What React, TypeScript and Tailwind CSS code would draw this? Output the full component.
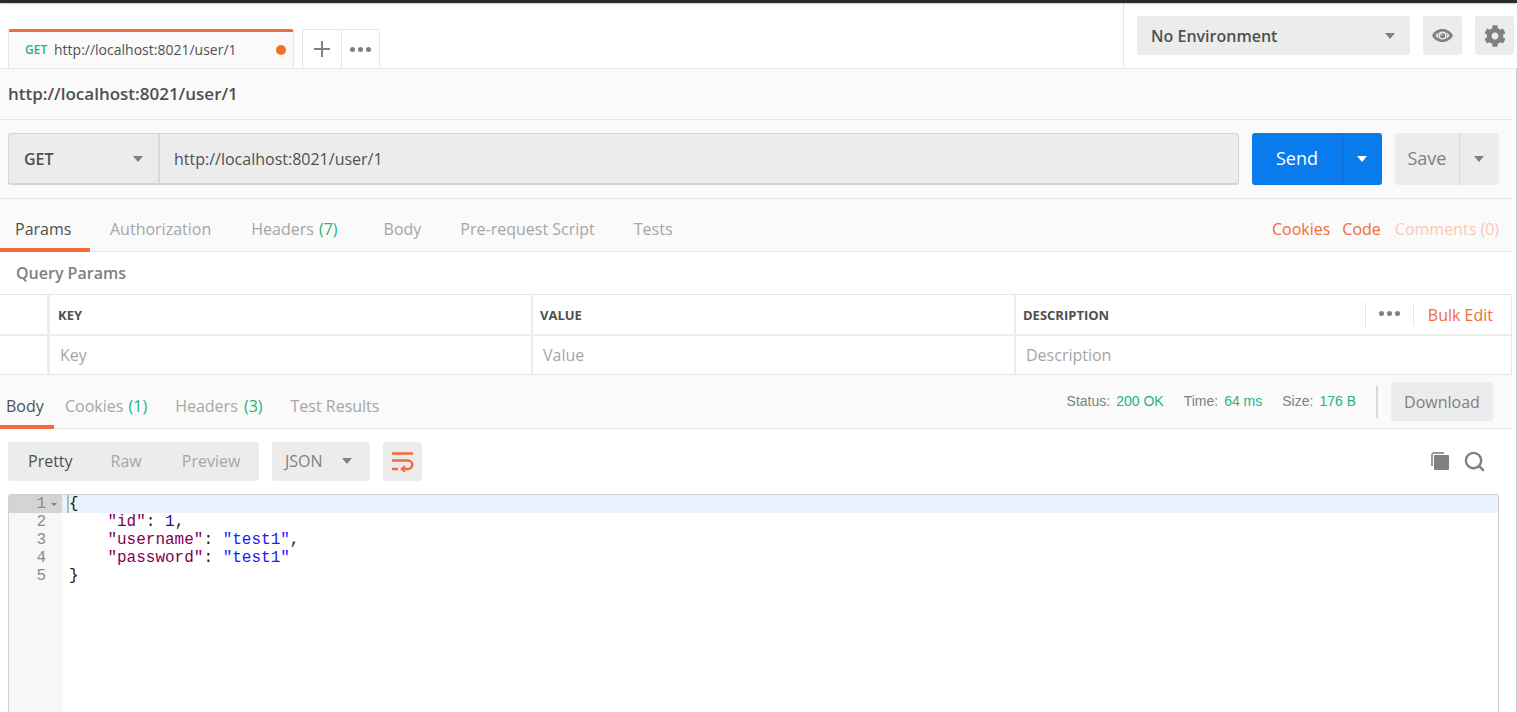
import { FaCog } from "react-icons/fa";
import { Search } from "lucide-react";

const orange = "text-[#f26b3a]";

function Caret({ className = "border-t-[#808080]" }: { className?: string }) {
  return <span className={`h-0 w-0 border-x-[5px] border-t-[6px] border-x-transparent ${className}`} />;
}

function Dots({ className = "" }: { className?: string }) {
  return (
    <span className={`flex gap-[3px] ${className}`}>
      <span className="h-[5px] w-[5px] rounded-full bg-[#808080]" />
      <span className="h-[5px] w-[5px] rounded-full bg-[#808080]" />
      <span className="h-[5px] w-[5px] rounded-full bg-[#808080]" />
    </span>
  );
}

function TabBar() {
  return (
    <div className="flex h-[66px] border-b border-[#e6e6e6] bg-white">
      <div className="flex flex-1 items-end pl-2">
        <div className="flex h-[39px] w-[286px] items-center rounded-t-[3px] border-x border-[#e6e6e6] border-t-[3px] border-t-[#f26b3a] bg-[#fafafa] pl-[16px] pr-[7px]">
          <span className="w-[29px] text-[12px] font-semibold text-[#26b47f]">GET</span>
          <span className="mb-[2px] flex-1 text-[14px] text-[#505050]">http://localhost:8021/user/1</span>
          <span className="h-[10px] w-[10px] rounded-full bg-[#f47023]" />
        </div>
        <div className="ml-2 flex h-[39px] w-[78px] rounded-t-[3px] border-x border-t border-[#e6e6e6]">
          <span className="flex w-[39px] items-center justify-center border-r border-[#e6e6e6]">
            <svg width="16" height="16" viewBox="0 0 16 16">
              <path d="M8 0v16M0 8h16" stroke="#808080" strokeWidth="2" />
            </svg>
          </span>
          <span className="flex flex-1 items-center justify-center">
            <Dots />
          </span>
        </div>
      </div>
      <div className="flex w-[394px] items-start border-l border-[#e6e6e6] pl-[13px] pt-[13px]">
        <div className="flex h-[39px] w-[273px] items-center justify-between rounded-[3px] bg-[#ececec] pl-[14px] pr-[15px] text-[16px] font-semibold text-[#505050]">
          No Environment
          <Caret />
        </div>
        <div className="ml-[13px] flex h-[39px] w-[39px] items-center justify-center rounded-[3px] bg-[#ececec]">
          <svg width="21" height="13" viewBox="0 0 21 13">
            <path
              fillRule="evenodd"
              fill="#808080"
              d="M10.500 0C6 0 2 2.600 0 6.500 2 10.400 6 13 10.500 13S19 10.400 21 6.500C19 2.600 15 0 10.500 0zm0 2.500a4 4 0 1 1 0 8 4 4 0 0 1 0-8zm-7 4a7 7 0 0 1 3.600-3.200 5 5 0 0 0 0 6.400 7 7 0 0 1-3.600-3.200zm14 0a7 7 0 0 1-3.600 3.200 5 5 0 0 0 0-6.400 7 7 0 0 1 3.600 3.200z"
            />
            <circle cx="10.500" cy="6.500" r="2.600" fill="#808080" />
            <circle cx="9.500" cy="5.500" r="0.900" fill="#ececec" />
          </svg>
        </div>
        <div className="ml-[13px] flex h-[39px] w-[39px] items-center justify-center rounded-[3px] bg-[#ececec]">
          <FaCog className="text-[22px] text-[#808080]" />
        </div>
      </div>
    </div>
  );
}

function RequestBar() {
  return (
    <div className="flex h-[79px] items-center gap-[13px] border-b border-[#e6e6e6] pl-2 pr-[13px]">
      <div className="flex h-[52px] flex-1 rounded-[3px] border border-b-2 border-[#d4d4d4] bg-[#ececec] text-[#505050]">
        <div className="flex w-[151px] items-center justify-between border-r-2 border-[#d9d9d9] pl-[15px] pr-[15px] text-[16px] font-semibold">
          GET
          <Caret />
        </div>
        <div className="flex items-center pl-[14px] text-[16px]">http://localhost:8021/user/1</div>
      </div>
      <div className="flex h-[52px] w-[130px] rounded-[3px] bg-[#097bed] text-white">
        <div className="flex w-[91px] items-center justify-center border-r border-[#0a6ad0] pb-[2px] text-[18px] font-medium">Send</div>
        <div className="flex flex-1 items-center justify-center pr-[2px]">
          <Caret className="border-t-white" />
        </div>
      </div>
      <div className="flex h-[52px] w-[104px] rounded-[3px] bg-[#ececec] text-[#808080]">
        <div className="flex w-[65px] items-center justify-center border-r border-[#d9d9d9] pb-[2px] text-[18px] font-medium">Save</div>
        <div className="flex flex-1 items-center justify-center pr-[2px]">
          <Caret />
        </div>
      </div>
    </div>
  );
}

function RequestTabs() {
  return (
    <div className="flex h-[53px] items-center border-b border-[#e6e6e6] pr-[13px] pt-[8px] text-[16px] text-[#a6a6a6]">
      <div className="relative flex h-full w-[90px] items-center pl-[15px] text-[#505050]">
        Params
        <span className="absolute inset-x-0 -bottom-px h-[4px] bg-[#f26b3a]" />
      </div>
      <span className="ml-[20px]">Authorization</span>
      <span className="ml-[40px]">
        Headers <span className="ml-px text-[#26b47f]">(7)</span>
      </span>
      <span className="ml-[46px]">Body</span>
      <span className="ml-[39px]">Pre-request Script</span>
      <span className="ml-[39px]">Tests</span>
      <span className={`ml-auto ${orange}`}>Cookies</span>
      <span className={`ml-[12px] ${orange}`}>Code</span>
      <span className="ml-[14px] text-[#fbc9b6]">Comments (0)</span>
    </div>
  );
}

function ParamsTable() {
  return (
    <div className="bg-white">
      <div className="flex h-[42px] items-center pl-4 text-[16px] font-semibold text-[#808080]">Query Params</div>
      <div className="grid grid-cols-[50px_483px_483px_1fr] grid-rows-[41px_38px] border-y border-r border-[#e6e6e6] text-[#a6a6a6]">
        <div className="border-b-2 border-r-[3px] border-[#ececec]" />
        <div className="flex items-center border-b-2 border-r-2 border-[#ececec] pl-[8px] pt-[2px] text-[13px] font-bold text-[#505050]">KEY</div>
        <div className="flex items-center border-b-2 border-r-2 border-[#ececec] pl-[7px] pt-[2px] text-[13px] font-bold text-[#505050]">VALUE</div>
        <div className="flex items-center border-b-2 border-[#ececec] pl-[7px] text-[13px] font-bold text-[#505050]">
          <span className="pt-[2px]">DESCRIPTION</span>
          <div className="ml-auto flex h-[26px] w-[48px] items-center justify-center border-l border-[#e6e6e6]">
            <Dots className="-translate-y-px" />
          </div>
          <div className={`flex h-[22px] items-center border-l border-[#e6e6e6] pl-[14px] pr-[18px] text-[16px] font-normal ${orange}`}>Bulk Edit</div>
        </div>
        <div className="border-r-[3px] border-[#ececec]" />
        <div className="flex items-center border-r-2 border-[#ececec] pl-[10px] text-[16px]">Key</div>
        <div className="flex items-center border-r-2 border-[#ececec] pl-[10px] text-[16px]">Value</div>
        <div className="flex items-center pl-[10px] text-[16px]">Description</div>
      </div>
    </div>
  );
}

function ResponseBar() {
  return (
    <div className="flex h-[54px] items-center border-b border-[#e6e6e6] pr-[19px] text-[16px] text-[#a6a6a6]">
      <div className="flex h-full items-center pt-[9px]">
        <div className="relative flex h-full w-[54px] items-center pl-[6px] text-[#505050]">
          Body
          <span className="absolute inset-x-0 -bottom-px h-[4px] bg-[#f26b3a]" />
        </div>
        <span className="ml-[11px]">
          Cookies <span className="ml-px text-[#26b47f]">(1)</span>
        </span>
        <span className="ml-[28px]">
          Headers <span className="ml-[2px] text-[#26b47f]">(3)</span>
        </span>
        <span className="ml-[28px]">Test Results</span>
      </div>
      <div className="ml-auto flex items-center font-['Liberation_Sans',sans-serif] text-[14px] text-[#808080]">
        <span>Status:</span>
        <span className="ml-[6px] text-[#26b47f]">200 OK</span>
        <span className="ml-[20px]">Time:</span>
        <span className="ml-[6px] text-[#26b47f]">64 ms</span>
        <span className="ml-[20px]">Size:</span>
        <span className="ml-[6px] text-[#26b47f]">176 B</span>
      </div>
      <span className="ml-[20px] h-[32px] w-[2px] bg-[#d9d9d9]" />
      <div className="ml-[13px] flex h-[39px] w-[102px] items-center justify-center rounded-[3px] bg-[#ececec] text-[#808080]">Download</div>
    </div>
  );
}

function ResponseTools() {
  return (
    <div className="flex h-[65px] items-center bg-white pl-2 pr-[26px] text-[16px]">
      <div className="flex h-[39px] w-[251px] items-center rounded-[3px] bg-[#ececec] pb-[2px] text-[#a6a6a6]">
        <span className="ml-[20px] text-[#505050]">Pretty</span>
        <span className="ml-[38px]">Raw</span>
        <span className="ml-[40px]">Preview</span>
      </div>
      <div className="ml-[13px] flex h-[39px] w-[98px] items-center justify-between rounded-[3px] bg-[#ececec] pb-[2px] pl-[13px] pr-[18px] text-[#808080]">
        JSON
        <Caret />
      </div>
      <div className="ml-[13px] flex h-[39px] w-[39px] items-center justify-center rounded-[3px] bg-[#ececec]">
        <svg width="22" height="20" viewBox="0 0 22 20" fill="none" stroke="#f26b3a" strokeWidth="2.400">
          <path d="M0 1.500h21M0 8.500h16a4.250 4.250 0 0 1 0 8.500h-6M0 17h6" />
          <path d="M13 14l-3.500 3 3.500 3" strokeWidth="1.800" />
        </svg>
      </div>
      <svg className="mb-[2px] ml-auto" width="20" height="20" viewBox="0 0 20 20" fill="#808080">
        <path d="M1 3.500 3 1h11v2H3.500L3 3.500V15H1z" opacity="0.800" />
        <rect x="4" y="4" width="15" height="15" rx="1" />
      </svg>
      <Search className="ml-[13px] h-[23px] w-[23px] text-[#808080]" strokeWidth={2.500} />
    </div>
  );
}

function Editor() {
  const lines = [1, 2, 3, 4, 5];
  const key = "text-[#7f0055]";
  const str = "text-[#1a1aff]";
  return (
    <div className="flex-1 bg-white pl-2 pr-[13px]">
      <div className="flex h-full overflow-hidden rounded-t-[3px] border-x border-t border-[#d0d0d0] font-['Liberation_Mono',monospace] text-[16px] leading-[18px] text-[#1a1a1a]">
        <div className="w-[53px] bg-[#f7f7f7] text-right text-[#8c8c8c]">
          {lines.map((n) => (
            <div key={n} className={`flex h-[18px] justify-end pr-[16px] ${n === 1 ? "relative bg-[#d4d4d4]" : ""}`}>
              {n}
              {n === 1 && (
                <span className="absolute right-[5px] top-[8px] h-0 w-0 border-x-[3px] border-t-[3px] border-x-transparent border-t-[#808080]" />
              )}
            </div>
          ))}
        </div>
        <div className="flex-1 whitespace-pre">
          <div className="h-[18px] bg-[#e8f2fc] pl-[7px]">
            <span className="-ml-[2px] border-l-2 border-[#a9bccf]">{"{"}</span>
          </div>
          <div className="pl-[7px]">
            {"    "}
            <span className={key}>"id"</span>: <span className="text-[#11118c]">1</span>,
          </div>
          <div className="pl-[7px]">
            {"    "}
            <span className={key}>"username"</span>: <span className={str}>"test1"</span>,
          </div>
          <div className="pl-[7px]">
            {"    "}
            <span className={key}>"password"</span>: <span className={str}>"test1"</span>
          </div>
          <div className="pl-[7px]">{"}"}</div>
        </div>
      </div>
    </div>
  );
}

export default function App() {
  return (
    <div className="flex h-[712px] w-[1517px] flex-col overflow-hidden bg-white font-['Open_Sans',sans-serif]">
      <div className="relative h-[3px] shrink-0 bg-[#2b2b2b] shadow-[0_1px_2px_rgba(0,0,0,0.2)]" />
      <TabBar />
      <div className="flex min-h-0 flex-1">
        <div className="flex w-[1512px] flex-col bg-[#fafafa]">
          <div className="flex h-[51px] items-center border-b border-[#e6e6e6] pl-2 text-[17px] font-semibold text-[#505050]">
            http://localhost:8021/user/1
          </div>
          <RequestBar />
          <RequestTabs />
          <ParamsTable />
          <ResponseBar />
          <ResponseTools />
          <Editor />
        </div>
        <div className="flex-1 border-r border-[#cfcfcf]" />
      </div>
    </div>
  );
}
